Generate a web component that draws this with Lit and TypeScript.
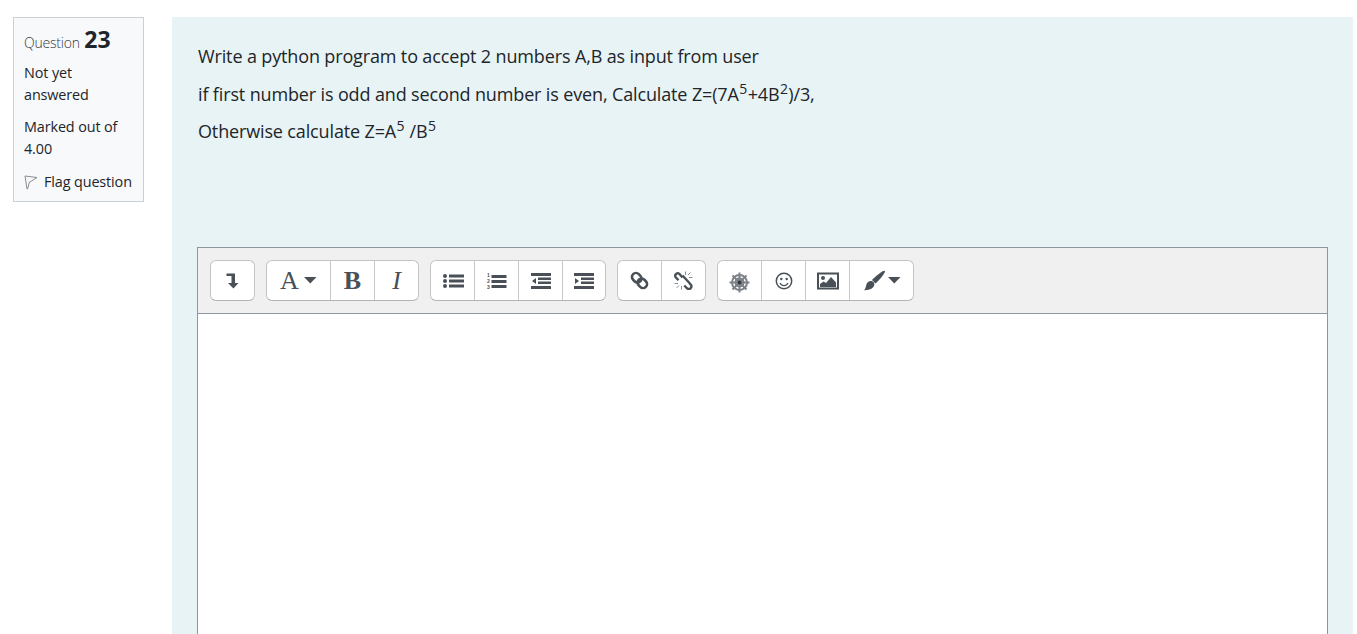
import {LitElement, css, html, svg} from 'lit';
import {customElement} from 'lit/decorators.js';

const ink = '#495057';

const caret = svg`<path d="M0 0h12.500L6.250 6.500z" fill="${ink}"/>`;

// the same four bars are used by outdent and indent, only the little arrow differs
const indentBars = svg`<rect x="0" y="0" width="20" height="3"/><rect x="7" y="4.500" width="13" height="2.500"/><rect x="7" y="8.500" width="13" height="2.500"/><rect x="0" y="13" width="20" height="3"/>`;

@customElement('app-root')
class AppRoot extends LitElement {

    icon(width: number, height: number, body: unknown) {
        return html`<svg width=${width} height=${height} viewBox="0 0 ${width} ${height}">${body}</svg>`;
    }

    render() {
        return html`
        <div class="page">
            <aside class="info">
                <div class="qno">Question <b>23</b></div>
                <div class="state">Not yet answered</div>
                <div class="grade">Marked out of 4.00</div>
                <div class="flag">
                    <svg width="14" height="15" viewBox="0 0 14 15"><path d="M1 1l12 1.500-5.500 3.500-2 1L3.500 14H3z" fill="none" stroke="#868e96" stroke-width="1"/></svg>
                    <span>Flag question</span>
                </div>
            </aside>
            <main class="content">
                <div class="prompt">
                    <p>Write a python program to accept 2 numbers A,B as input from user</p>
                    <p>if first number is odd and second number is even, Calculate Z=(7A<sup>5</sup>+4B<sup>2</sup>)/3,</p>
                    <p>Otherwise calculate Z=A<sup>5</sup> /B<sup>5</sup></p>
                </div>
                <div class="editor">
                    <div class="toolbar">
                        <div class="group">
                            <button>${this.icon(13, 16, svg`<path d="M.5 .5h8.500V10h3.500L7.500 15.500 2 10h3.500V3H.5z" fill="${ink}"/>`)}</button>
                        </div>
                        <div class="group">
                            <button class="serif wide"><span>A</span>${this.icon(13, 7, caret)}</button>
                            <button class="serif bold">B</button>
                            <button class="serif ital">I</button>
                        </div>
                        <div class="group">
                            <button>${this.icon(22, 16, svg`<g fill="${ink}"><circle cx="3" cy="3" r="2"/><circle cx="3" cy="8" r="2"/><circle cx="3" cy="13" r="2"/><rect x="7" y="1.500" width="15" height="3"/><rect x="7" y="6.500" width="15" height="3"/><rect x="7" y="11.500" width="15" height="3"/></g>`)}</button>
                            <button>${this.icon(21, 20, svg`<g fill="${ink}"><rect x="5.500" y="4" width="15" height="3"/><rect x="5.500" y="9" width="15" height="3"/><rect x="5.500" y="14" width="15" height="3"/><g font-family="Liberation Sans" font-size="5" font-weight="700"><text x="1" y="6">1</text><text x="1" y="12">2</text><text x="1" y="18">3</text></g></g>`)}</button>
                            <button>${this.icon(20, 16, svg`<g fill="${ink}">${indentBars}<path d="M5 5v6L1 8z"/></g>`)}</button>
                            <button class="narrow">${this.icon(20, 16, svg`<g fill="${ink}">${indentBars}<path d="M1 5v6l4-3z"/></g>`)}</button>
                        </div>
                        <div class="group">
                            <button>${this.icon(19, 19, svg`<g fill="none" stroke="${ink}" stroke-width="2.600" transform="rotate(45 9.500 9.500)"><rect x="0.500" y="5.500" width="10" height="8" rx="4"/><rect x="8.500" y="5.500" width="10" height="8" rx="4"/></g>`)}</button>
                            <button>${this.icon(19, 19, svg`<g fill="none" stroke="${ink}" stroke-width="2.400"><path d="M8.500 6.500L5.500 3a2.500 2.500 0 0 0-3.800 3.200l2.800 3"/><path d="M8.500 4.500L15 11.500l2 2.500a2.600 2.600 0 0 1-3.700 3.500l-3-3"/></g><g stroke="#868e96" stroke-width="1"><path d="M11.500 .5v3.500M16.500 1.500l-2.500 2.500M18.500 6.500h-3.500M.5 12.500h3.500M2.500 17l2.500-2.500M7.500 18.500V15"/></g>`)}</button>
                        </div>
                        <div class="group">
                            <button class="drop">${this.icon(21, 21, svg`<g fill="none" stroke="#7d8288"><circle cx="10.500" cy="10.500" r="4" stroke-width="2"/><circle cx="10.500" cy="10.500" r="7.500" stroke-width="2"/><path d="M10.500 .5v20M.5 10.500h20M3.500 3.500l14 14M17.500 3.500l-14 14" stroke-width="2"/></g><circle cx="10.500" cy="10.500" r="2" fill="#343a40"/>`)}</button>
                            <button>${this.icon(18, 18, svg`<circle cx="9" cy="9" r="7.700" fill="none" stroke="${ink}" stroke-width="1.500"/><circle cx="6.300" cy="7" r="1.200" fill="${ink}"/><circle cx="11.700" cy="7" r="1.200" fill="${ink}"/><path d="M5 11c1 2 2.500 2.700 4 2.700s3-.7 4-2.700" fill="none" stroke="${ink}" stroke-width="1.300"/>`)}</button>
                            <button>${this.icon(22, 18, svg`<rect x="1" y="1.500" width="20" height="15" fill="none" stroke="${ink}" stroke-width="2"/><circle cx="6" cy="6" r="2" fill="${ink}"/><path d="M3 15v-3l3.500-2.500 2.500 1.500 5-6 5 5.500V15z" fill="${ink}"/>`)}</button>
                            <button class="brush">${this.icon(22, 21, svg`<path d="M21 .8c.8 0 1.200.8.800 1.500C19.500 6.500 15.500 11 12.500 13.500L9 10C12 7 17.500 2 21 .8z" fill="${ink}"/><path d="M7.800 11c2.200 0 4 1.800 3.500 4-.6 3.200-4.500 5.400-10.300 5.200 1.900-1.600 1.600-3.200 2.400-5.600C4 12.400 6 11 7.800 11z" fill="${ink}"/>`)}${this.icon(13, 7, caret)}</button>
                        </div>
                    </div>
                    <div class="area"></div>
                </div>
            </main>
        </div>
        `;
    }

    static styles = css`
        :host {
            display: block;
            font-family: "Open Sans", "Noto Sans", sans-serif;
            color: #212529;
        }

        .page {
            display: flex;
            align-items: flex-start;
            gap: 28px;
            height: 634px;
            overflow: hidden;
            box-sizing: border-box;
            padding: 17px 4px 0 13px;
        }

        .info {
            box-sizing: border-box;
            flex: 0 0 131px;
            height: 185px;
            padding: 8px 10px;
            background: #f8f9fa;
            border: 1px solid #cad0d7;
            font-size: 14.4px;
            line-height: 22px;
            letter-spacing: -0.12px;
        }

        .qno {
            font-size: 14px;
            font-weight: 300;
            line-height: 27px;
            color: #343a40;
            margin-bottom: 6px;
            letter-spacing: -0.2px;
            white-space: nowrap;

            & b {
                font-size: 23px;
                font-weight: 700;
                margin-left: 1px;
                color: #212529;
                letter-spacing: 0;
            }
        }

        .state {
            margin-bottom: 10px;
        }

        .grade {
            margin-bottom: 11px;
        }

        .flag {
            display: flex;
            align-items: center;
            gap: 6px;
            white-space: nowrap;
        }

        .content {
            flex: 1;
            align-self: stretch;
            box-sizing: border-box;
            padding: 26px 25px 0;
            background: #e7f3f5;
        }

        .prompt {
            height: 204px;
            padding-left: 1px;
            font-size: 18px;
            letter-spacing: -0.14px;
            line-height: 26px;

            & p {
                margin: 0 0 11.5px;
            }

            & sup {
                font-size: 14px;
                line-height: 0;
                padding: 0 0.5px;
            }
        }

        .editor {
            border: 1px solid #8f959e;
            height: 500px;
            background: #fff;
        }

        .toolbar {
            display: flex;
            align-items: flex-start;
            gap: 11px;
            height: 66px;
            box-sizing: border-box;
            padding: 12px 12px 0;
            background: #f0f0f0;
            border-bottom: 1px solid #8f959e;
        }

        .group {
            display: flex;
            box-sizing: border-box;
            height: 41px;
            background: #fff;
            border: 1px solid #c4c4c4;
            border-bottom-color: #b4b4b4;
            border-radius: 6px;
        }

        button {
            display: flex;
            align-items: center;
            justify-content: center;
            gap: 5px;
            width: 44px;
            height: 100%;
            padding: 0;
            border: 0;
            border-left: 1px solid #c8c8c8;
            background: none;
            color: #495057;

            &:first-child {
                border-left: 0;
                width: 43px;
            }

            &.narrow {
                width: 43px;
            }

            &.wide {
                width: 63px;
            }

            &.brush {
                width: 64px;
                gap: 3px;
            }

            &.drop svg {
                margin-top: 3px;
            }
        }

        .serif {
            font-family: "Liberation Serif", serif;
            font-size: 26px;
        }

        .bold {
            font-weight: 700;
        }

        .ital {
            font-style: italic;
        }

        .area {
            height: 100%;
        }
    `;
}
